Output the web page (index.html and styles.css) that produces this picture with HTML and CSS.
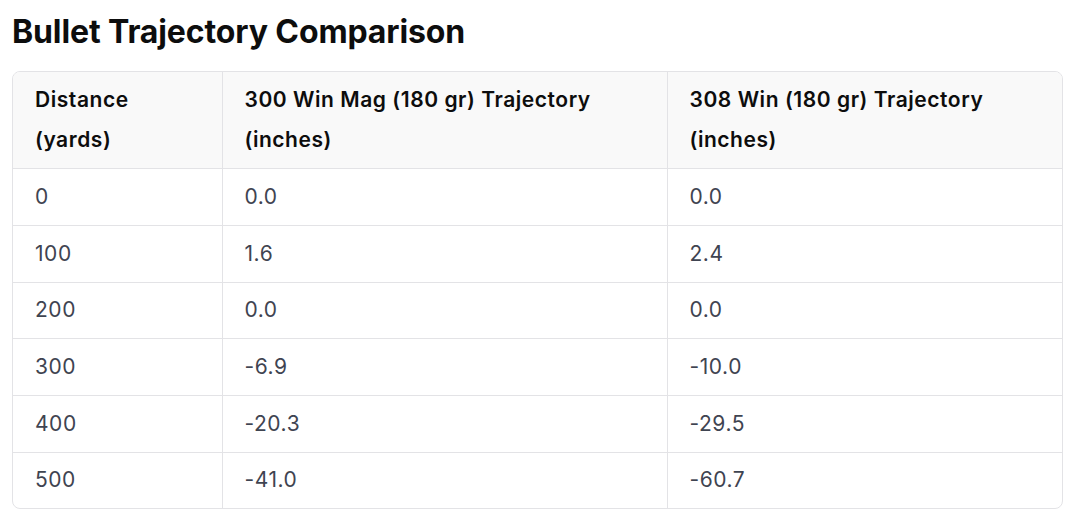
FILE: index.html
```html
<!DOCTYPE html>
<html>
<head>
<meta charset="utf-8">
<link rel="stylesheet" href="styles.css">
</head>
<body>
<div class="page">
  <h1 class="title">Bullet Trajectory Comparison</h1>
  <div class="table-wrap">
    <table class="data">
      <colgroup>
        <col class="c1"><col class="c2"><col class="c3">
      </colgroup>
      <thead>
        <tr><th>Distance<br>(yards)</th><th>300 Win Mag (180 gr) Trajectory<br>(inches)</th><th>308 Win (180 gr) Trajectory<br>(inches)</th></tr>
      </thead>
      <tbody>
        <tr><td>0</td><td>0.0</td><td>0.0</td></tr>
        <tr><td>100</td><td>1.6</td><td>2.4</td></tr>
        <tr><td>200</td><td>0.0</td><td>0.0</td></tr>
        <tr><td>300</td><td>-6.9</td><td>-10.0</td></tr>
        <tr><td>400</td><td>-20.3</td><td>-29.5</td></tr>
        <tr><td>500</td><td>-41.0</td><td>-60.7</td></tr>
      </tbody>
    </table>
  </div>
</div>
</body>
</html>
```
FILE: styles.css
```css
* { box-sizing: border-box; }
html, body { margin: 0; padding: 0; background: #ffffff; }
body { font-family: Inter, "Noto Sans", sans-serif; color: #0d0d0d; }
.page { padding: 12px 5px 0 12px; }
.title {
  margin: 0;
  font-size: 32px;
  font-weight: 700;
  line-height: 40px;
  letter-spacing: -0.12px;
  color: #0d0d0d;
}
.table-wrap {
  margin-top: 19px;
  width: 1051px;
  border: 1px solid #e3e3e6;
  border-radius: 8px;
  overflow: hidden;
}
.data {
  width: 100%;
  border-collapse: collapse;
  table-layout: fixed;
  font-size: 21px;
  letter-spacing: 0.55px;
}
.c1 { width: 209px; }
.c2 { width: 445px; }
.c3 { width: auto; }
.data th, .data td {
  text-align: left;
  padding: 7.5px 22px;
  line-height: 40.67px;
  border-left: 1px solid #e3e3e6;
  border-top: 1px solid #e3e3e6;
  vertical-align: top;
}
.data th:first-child, .data td:first-child { border-left: none; }
.data thead th { border-top: none; background: #f9f9f9; font-weight: 600; color: #0d0d0d; }
.data td { color: #3f4451; font-weight: 400; }
```
